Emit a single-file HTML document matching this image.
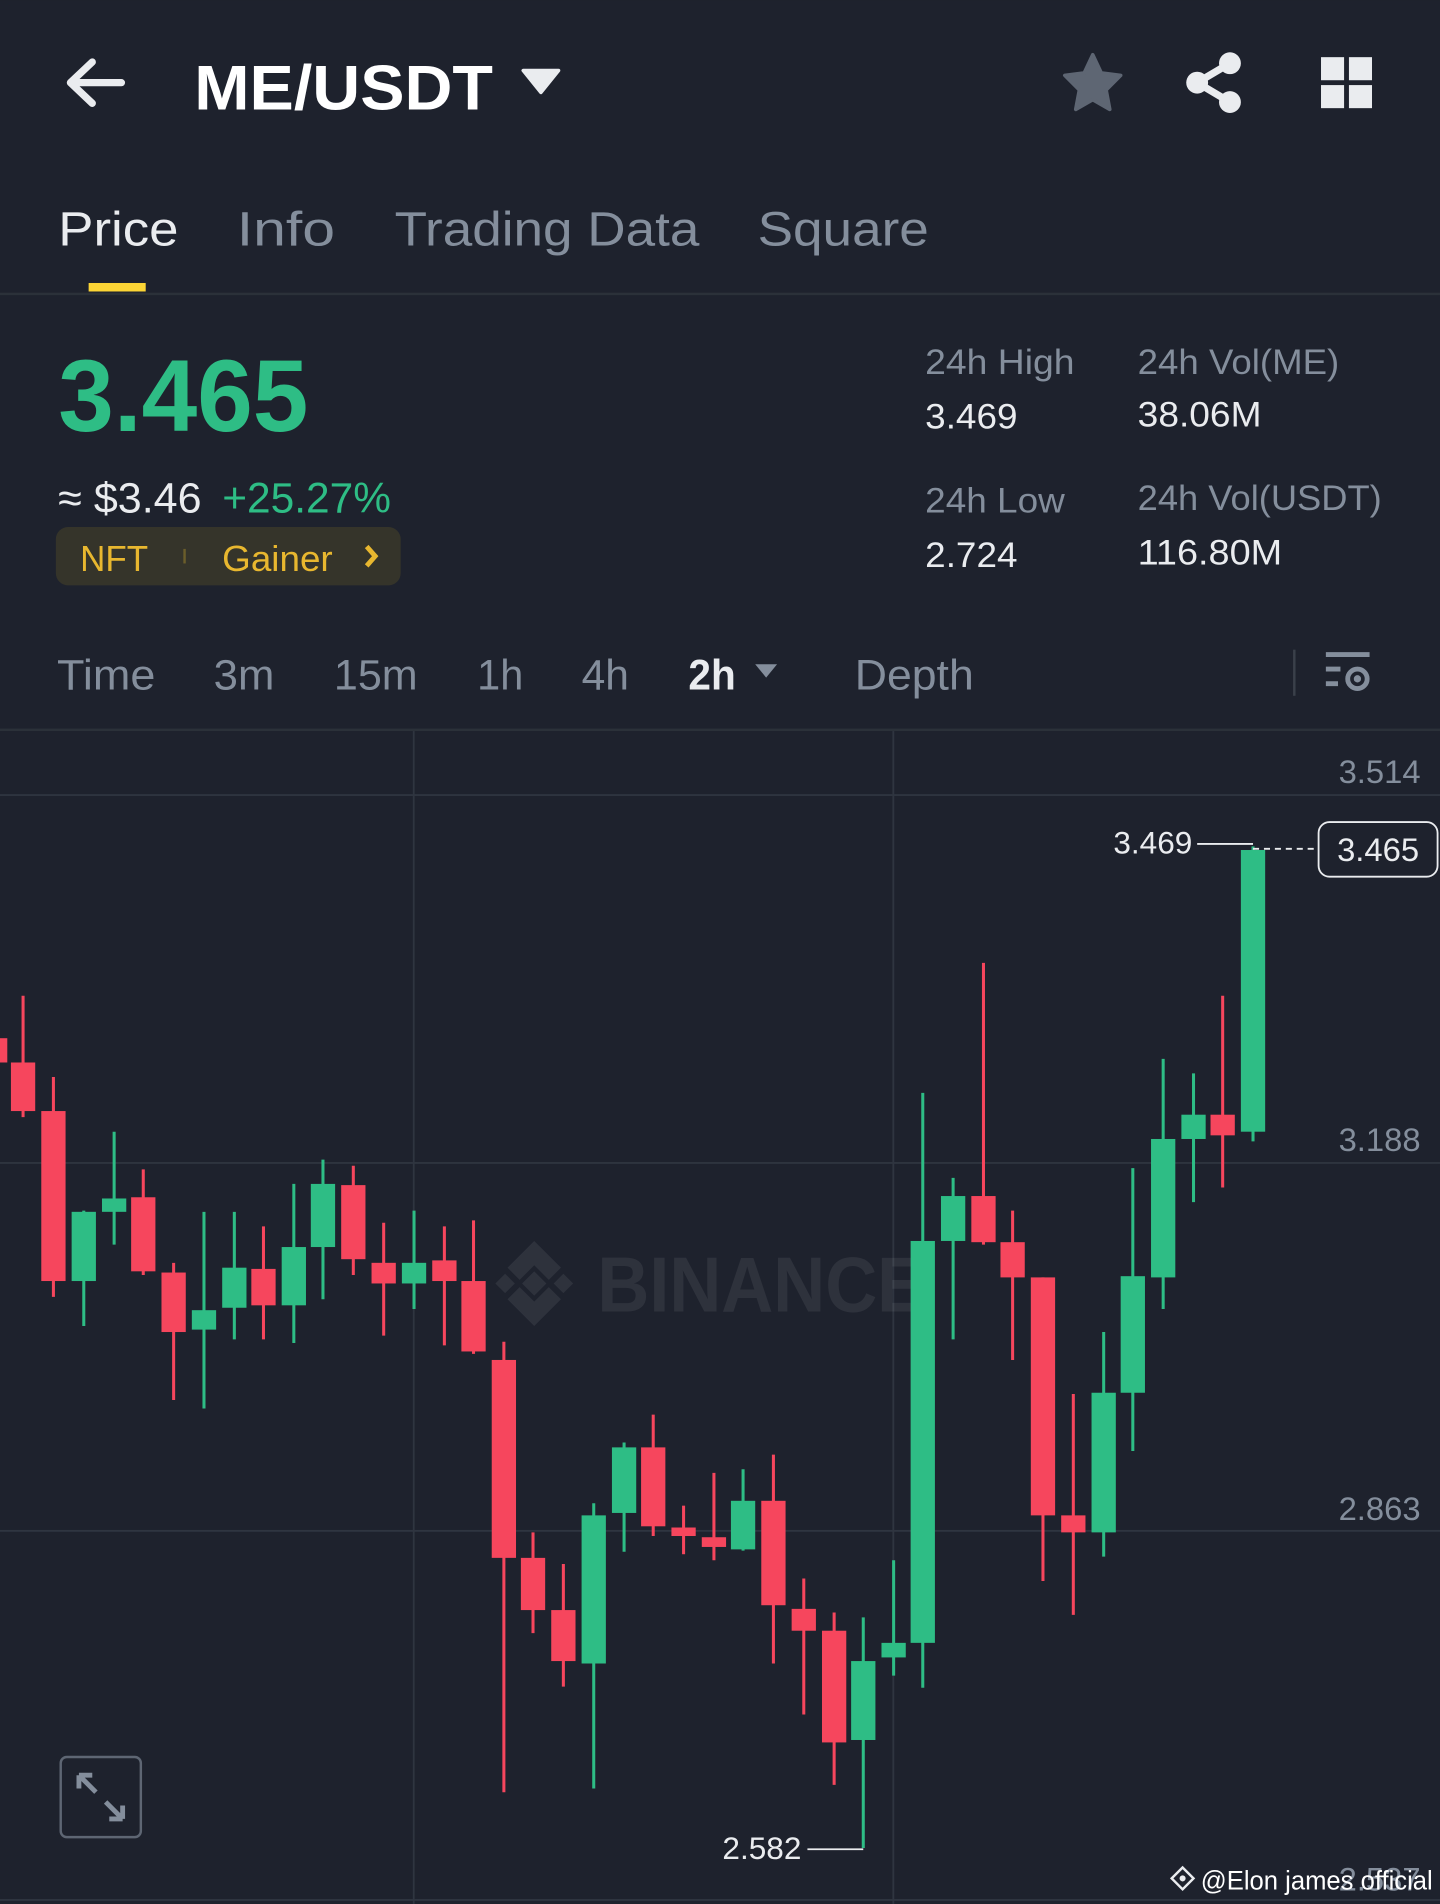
<!DOCTYPE html>
<html><head><meta charset="utf-8"><style>
html,body{margin:0;padding:0;background:#1e222d;}
svg{display:block;}
text{font-family:"Liberation Sans",sans-serif;}
</style></head><body>
<svg width="1440" height="1904" viewBox="0 0 1186 1568" xmlns="http://www.w3.org/2000/svg">
<rect width="1186" height="1568" fill="#1e222d"/>
<!-- header -->
<path d="M100 68H60M76 51L58 68L76 85" stroke="#eaecef" stroke-width="6" fill="none" stroke-linecap="round" stroke-linejoin="round"/>
<text x="160" y="90" font-size="52" font-weight="bold" fill="#ffffff" textLength="246" lengthAdjust="spacingAndGlyphs">ME/USDT</text>
<path d="M431 58H460L445.5 76Z" fill="#eaecef" stroke="#eaecef" stroke-width="3" stroke-linejoin="round"/>
<path d="M900 45L907 60L923 62L911 74L914 90L900 82L886 90L889 74L877 62L893 60Z" fill="#5e6673" stroke="#5e6673" stroke-width="3" stroke-linejoin="round"/>
<g fill="#eaecef"><circle cx="1013" cy="52" r="9"/><circle cx="1013" cy="84" r="9"/><circle cx="986" cy="68" r="9"/></g>
<path d="M1013 52L986 68L1013 84" stroke="#eaecef" stroke-width="6" fill="none"/>
<g fill="#eaecef"><rect x="1088" y="47" width="19" height="19"/><rect x="1111" y="47" width="19" height="19"/><rect x="1088" y="70" width="19" height="19"/><rect x="1111" y="70" width="19" height="19"/></g>
<!-- tabs -->
<text x="48" y="202" font-size="40" fill="#eaecef" textLength="99" lengthAdjust="spacingAndGlyphs">Price</text>
<text x="195" y="202" font-size="40" fill="#848e9c" textLength="81" lengthAdjust="spacingAndGlyphs">Info</text>
<text x="325" y="202" font-size="40" fill="#848e9c" textLength="251" lengthAdjust="spacingAndGlyphs">Trading Data</text>
<text x="624" y="202" font-size="40" fill="#848e9c" textLength="141" lengthAdjust="spacingAndGlyphs">Square</text>
<rect x="73" y="233" width="47" height="7" fill="#fcd535"/>
<rect x="0" y="241" width="1186" height="2" fill="#2b3139"/>
<!-- price -->
<text x="48" y="355" font-size="84" font-weight="bold" fill="#2ebd85" textLength="206" lengthAdjust="spacingAndGlyphs">3.465</text>
<text x="48" y="422" font-size="35" fill="#eaecef" textLength="118" lengthAdjust="spacingAndGlyphs">≈ $3.46</text>
<text x="183" y="422" font-size="35" fill="#2ebd85" textLength="139" lengthAdjust="spacingAndGlyphs">+25.27%</text>
<rect x="46" y="434" width="284" height="48" rx="10" fill="#35342a"/>
<text x="66" y="470" font-size="30" fill="#e8b72f" textLength="56" lengthAdjust="spacingAndGlyphs">NFT</text>
<rect x="151" y="452" width="2" height="12" fill="#6b5d2a"/>
<text x="183" y="470" font-size="30" fill="#e8b72f" textLength="91" lengthAdjust="spacingAndGlyphs">Gainer</text>
<path d="M302 450L309 458L302 466" stroke="#e8b72f" stroke-width="4" fill="none"/>
<!-- stats -->
<g font-size="29">
<text x="762" y="308" fill="#848e9c" textLength="123" lengthAdjust="spacingAndGlyphs">24h High</text>
<text x="762" y="353" fill="#eaecef" textLength="76" lengthAdjust="spacingAndGlyphs">3.469</text>
<text x="937" y="308" fill="#848e9c" textLength="166" lengthAdjust="spacingAndGlyphs">24h Vol(ME)</text>
<text x="937" y="351" fill="#eaecef" textLength="102" lengthAdjust="spacingAndGlyphs">38.06M</text>
<text x="762" y="422" fill="#848e9c" textLength="115" lengthAdjust="spacingAndGlyphs">24h Low</text>
<text x="762" y="467" fill="#eaecef" textLength="76" lengthAdjust="spacingAndGlyphs">2.724</text>
<text x="937" y="420" fill="#848e9c" textLength="201" lengthAdjust="spacingAndGlyphs">24h Vol(USDT)</text>
<text x="937" y="465" fill="#eaecef" textLength="119" lengthAdjust="spacingAndGlyphs">116.80M</text>
</g>
<!-- intervals -->
<g font-size="35" fill="#848e9c">
<text x="47" y="568" textLength="81" lengthAdjust="spacingAndGlyphs">Time</text>
<text x="176" y="568" textLength="50" lengthAdjust="spacingAndGlyphs">3m</text>
<text x="275" y="568" textLength="69" lengthAdjust="spacingAndGlyphs">15m</text>
<text x="393" y="568" textLength="38" lengthAdjust="spacingAndGlyphs">1h</text>
<text x="479" y="568" textLength="39" lengthAdjust="spacingAndGlyphs">4h</text>
<text x="704" y="568" textLength="98" lengthAdjust="spacingAndGlyphs">Depth</text>
</g>
<text x="567" y="568" font-size="35" font-weight="bold" fill="#eaecef" textLength="39" lengthAdjust="spacingAndGlyphs">2h</text>
<path d="M622 547H640L631 558Z" fill="#848e9c"/>
<rect x="1065" y="535" width="2" height="38" fill="#3a404a"/>
<g stroke="#848e9c" stroke-width="4" fill="none">
<path d="M1092 539H1128M1092 551H1104M1092 563H1102"/>
<circle cx="1118" cy="559" r="8"/>
</g>
<circle cx="1118" cy="559" r="3" fill="#848e9c"/>
<rect x="0" y="600" width="1186" height="2" fill="#2b3139"/>
<!-- grid -->
<g fill="#2f3540">
<rect x="0" y="654" width="1186" height="1.5"/>
<rect x="0" y="957" width="1186" height="1.5"/>
<rect x="0" y="1260" width="1186" height="1.5"/>
<rect x="0" y="1564" width="1186" height="1.5"/>
<rect x="340" y="602" width="1.5" height="966"/>
<rect x="735" y="602" width="1.5" height="966"/>
</g>
<g font-size="27" fill="#848e9c" text-anchor="end">
<text x="1170" y="645">3.514</text>
<text x="1170" y="948">3.188</text>
<text x="1170" y="1252">2.863</text>
<text x="1170" y="1557">2.537</text>
</g>
<!-- watermark -->
<g opacity="0.08" fill="#eaecef">
<path d="M440 1022L462 1044L452 1054L440 1042L428 1054L418 1044Z"/>
<path d="M440 1092L462 1070L452 1060L440 1072L428 1060L418 1070Z"/>
<path d="M440 1047L450 1057L440 1067L430 1057Z"/>
<path d="M408 1057L416 1049L424 1057L416 1065Z"/><path d="M456 1057L464 1049L472 1057L464 1065Z"/>
<text x="492" y="1080" font-size="64" font-weight="bold" textLength="270" lengthAdjust="spacingAndGlyphs">BINANCE</text>
</g>
<!-- candles -->
<g id="c"></g>
<g stroke-width="2.5">
<g stroke="#f6465d" fill="#f6465d">
<rect x="-8" y="855" width="14" height="20" stroke="none"/>
<line x1="19" y1="820" x2="19" y2="920"/><rect x="9" y="875" width="20" height="40" stroke="none"/>
<line x1="44" y1="887" x2="44" y2="1068"/><rect x="34" y="915" width="20" height="140" stroke="none"/>
<line x1="118" y1="963" x2="118" y2="1050"/><rect x="108" y="986" width="20" height="61" stroke="none"/>
<line x1="143" y1="1040" x2="143" y2="1153"/><rect x="133" y="1048" width="20" height="49" stroke="none"/>
<line x1="217" y1="1010" x2="217" y2="1103"/><rect x="207" y="1045" width="20" height="30" stroke="none"/>
<line x1="291" y1="960" x2="291" y2="1050"/><rect x="281" y="976" width="20" height="61" stroke="none"/>
<line x1="316" y1="1007" x2="316" y2="1100"/><rect x="306" y="1040" width="20" height="17" stroke="none"/>
<line x1="366" y1="1010" x2="366" y2="1108"/><rect x="356" y="1038" width="20" height="17" stroke="none"/>
<line x1="390" y1="1005" x2="390" y2="1115"/><rect x="380" y="1055" width="20" height="58" stroke="none"/>
<line x1="415" y1="1105" x2="415" y2="1476"/><rect x="405" y="1120" width="20" height="163" stroke="none"/>
<line x1="439" y1="1262" x2="439" y2="1345"/><rect x="429" y="1283" width="20" height="43" stroke="none"/>
<line x1="464" y1="1288" x2="464" y2="1389"/><rect x="454" y="1326" width="20" height="42" stroke="none"/>
<line x1="538" y1="1165" x2="538" y2="1265"/><rect x="528" y="1192" width="20" height="65" stroke="none"/>
<line x1="563" y1="1240" x2="563" y2="1280"/><rect x="553" y="1258" width="20" height="7" stroke="none"/>
<line x1="588" y1="1213" x2="588" y2="1285"/><rect x="578" y="1266" width="20" height="8" stroke="none"/>
<line x1="637" y1="1198" x2="637" y2="1370"/><rect x="627" y="1236" width="20" height="86" stroke="none"/>
<line x1="662" y1="1300" x2="662" y2="1412"/><rect x="652" y="1325" width="20" height="18" stroke="none"/>
<line x1="687" y1="1328" x2="687" y2="1470"/><rect x="677" y="1343" width="20" height="92" stroke="none"/>
<line x1="810" y1="793" x2="810" y2="1025"/><rect x="800" y="985" width="20" height="38" stroke="none"/>
<line x1="834" y1="997" x2="834" y2="1120"/><rect x="824" y="1023" width="20" height="29" stroke="none"/>
<line x1="859" y1="1052" x2="859" y2="1302"/><rect x="849" y="1052" width="20" height="196" stroke="none"/>
<line x1="884" y1="1148" x2="884" y2="1330"/><rect x="874" y="1248" width="20" height="14" stroke="none"/>
<line x1="1007" y1="820" x2="1007" y2="978"/><rect x="997" y="918" width="20" height="17" stroke="none"/>
</g>
<g stroke="#2ebd85" fill="#2ebd85">
<line x1="69" y1="997" x2="69" y2="1092"/><rect x="59" y="998" width="20" height="57" stroke="none"/>
<line x1="94" y1="932" x2="94" y2="1025"/><rect x="84" y="987" width="20" height="11" stroke="none"/>
<line x1="168" y1="998" x2="168" y2="1160"/><rect x="158" y="1079" width="20" height="16" stroke="none"/>
<line x1="193" y1="998" x2="193" y2="1103"/><rect x="183" y="1044" width="20" height="33" stroke="none"/>
<line x1="242" y1="975" x2="242" y2="1106"/><rect x="232" y="1027" width="20" height="48" stroke="none"/>
<line x1="266" y1="955" x2="266" y2="1070"/><rect x="256" y="975" width="20" height="52" stroke="none"/>
<line x1="341" y1="997" x2="341" y2="1078"/><rect x="331" y="1040" width="20" height="17" stroke="none"/>
<line x1="489" y1="1238" x2="489" y2="1473"/><rect x="479" y="1248" width="20" height="122" stroke="none"/>
<line x1="514" y1="1188" x2="514" y2="1278"/><rect x="504" y="1192" width="20" height="54" stroke="none"/>
<line x1="612" y1="1210" x2="612" y2="1277"/><rect x="602" y="1236" width="20" height="40" stroke="none"/>
<line x1="711" y1="1332" x2="711" y2="1522"/><rect x="701" y="1368" width="20" height="65" stroke="none"/>
<line x1="736" y1="1285" x2="736" y2="1380"/><rect x="726" y="1353" width="20" height="12" stroke="none"/>
<line x1="760" y1="900" x2="760" y2="1390"/><rect x="750" y="1022" width="20" height="331" stroke="none"/>
<line x1="785" y1="970" x2="785" y2="1103"/><rect x="775" y="985" width="20" height="37" stroke="none"/>
<line x1="909" y1="1097" x2="909" y2="1282"/><rect x="899" y="1147" width="20" height="115" stroke="none"/>
<line x1="933" y1="962" x2="933" y2="1195"/><rect x="923" y="1051" width="20" height="96" stroke="none"/>
<line x1="958" y1="872" x2="958" y2="1078"/><rect x="948" y="938" width="20" height="114" stroke="none"/>
<line x1="983" y1="884" x2="983" y2="990"/><rect x="973" y="918" width="20" height="20" stroke="none"/>
<line x1="1032" y1="697" x2="1032" y2="940"/><rect x="1022" y="700" width="20" height="232" stroke="none"/>
</g>
</g>
<!-- annotations -->
<text x="917" y="703" font-size="26" fill="#eaecef">3.469</text>
<line x1="986" y1="695" x2="1032" y2="695" stroke="#eaecef" stroke-width="1.5"/>
<line x1="1032" y1="699" x2="1086" y2="699" stroke="#eaecef" stroke-width="1.5" stroke-dasharray="5,4"/>
<rect x="1086" y="677" width="98" height="45" rx="9" fill="#1e222d" stroke="#eaecef" stroke-width="1.5"/>
<text x="1135" y="709" font-size="27" fill="#eaecef" text-anchor="middle">3.465</text>
<text x="595" y="1531" font-size="26" fill="#eaecef">2.582</text>
<line x1="665" y1="1523" x2="711" y2="1523" stroke="#eaecef" stroke-width="1.5"/>
<!-- expand btn -->
<rect x="50" y="1447" width="66" height="66" rx="5" fill="none" stroke="#5e6673" stroke-width="2"/>
<path d="M65 1462L79 1476M65 1462H76M65 1462V1473M101 1498L87 1484M101 1498H90M101 1498V1487" stroke="#848e9c" stroke-width="4" fill="none"/>
<!-- credit -->
<path d="M974 1538L983 1547L974 1556L965 1547Z" fill="none" stroke="#eaecef" stroke-width="2"/>
<circle cx="974" cy="1547" r="2.5" fill="#eaecef"/>
<text x="989" y="1556" font-size="22" fill="#ffffff" textLength="191" lengthAdjust="spacingAndGlyphs">@Elon james official</text>
</svg>
</body></html>
